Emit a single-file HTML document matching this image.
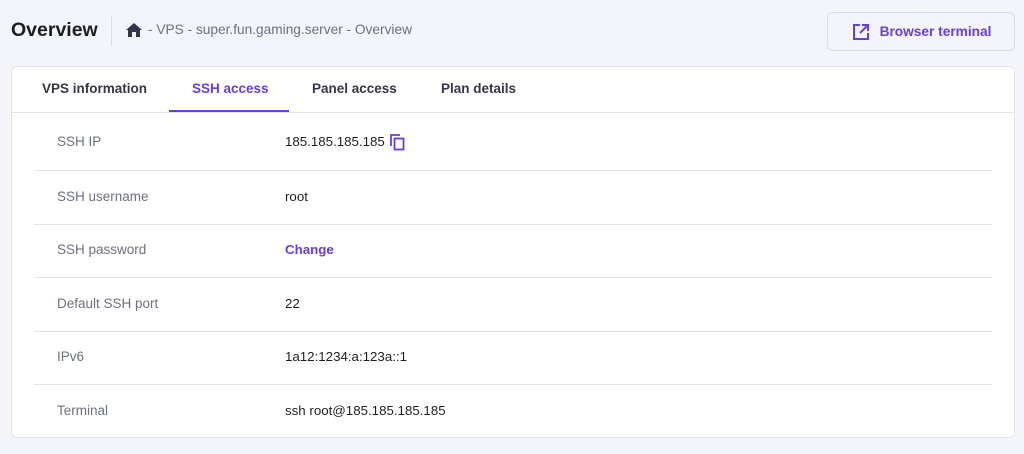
<!DOCTYPE html><html><head><style>
body{margin:0;width:1024px;height:454px;background:#f4f4fb;font-family:"Liberation Sans",sans-serif;position:relative;overflow:hidden;color:#2f1c6a}
.abs{position:absolute}
.title{left:11px;top:19px;font-size:19.5px;font-weight:bold;color:#1d1e20}
.sep{left:111px;top:16px;width:1px;height:30px;background:#dcdce6}
.bc{left:126px;top:22px;font-size:13.7px;color:#6d7081;display:flex;align-items:center;gap:6px}
.btn{left:827px;top:12px;width:188px;height:39px;border:1px solid #dadce6;border-radius:6px;box-sizing:border-box;display:flex;align-items:center;gap:9px;justify-content:center;color:#673de6;font-weight:bold;font-size:13.7px}
.card{left:11px;top:66px;width:1004px;height:372px;background:#fff;border:1px solid #e3e3ea;border-radius:6px;box-sizing:border-box}
.tab{top:81px;font-size:13.5px;font-weight:bold;color:#36344d}
.ul{left:169px;top:110px;width:120px;height:2px;background:#673de6}
.tl{left:12px;top:112px;width:1001px;height:1px;background:#e3e3ea}
.row{left:34px;width:958px;height:1px;background:#e3e3ea}
.lab{left:57px;font-size:13.5px;color:#6d7081}
.val{left:285px;font-size:13.3px;color:#1d1e20}
</style></head><body>
<div class="abs title">Overview</div>
<div class="abs sep"></div>
<div class="abs bc"><svg width="16" height="14" viewBox="0 0 16 14"><path d="M8 0L0 7h2v7h4V9h4v5h4V7h2z" fill="#36344d"/></svg><span>- VPS - super.fun.gaming.server - Overview</span></div>
<div class="abs btn"><svg width="20" height="20" viewBox="0 0 20 20" fill="none" stroke="#673de6" stroke-width="2"><path d="M9 3H3v14h14v-6M11 3h6v6M17 3L9 11"/></svg>Browser terminal</div>
<div class="abs card"></div>
<div class="abs tab" style="left:42px">VPS information</div>
<div class="abs tab" style="left:192px;color:#673de6">SSH access</div>
<div class="abs tab" style="left:312px">Panel access</div>
<div class="abs tab" style="left:441px">Plan details</div>
<div class="abs tl"></div><div class="abs ul"></div>
<div class="abs lab" style="top:134px">SSH IP</div>
<div class="abs val" style="top:134px">185.185.185.185</div>
<svg class="abs" style="left:389px;top:133px" width="18" height="18" viewBox="0 0 18 18" fill="none" stroke="#673de6" stroke-width="1.8"><path d="M2 13V2h9"/><rect x="5.5" y="5.5" width="9" height="11"/></svg>
<div class="abs row" style="top:170px"></div>
<div class="abs lab" style="top:189px">SSH username</div><div class="abs val" style="top:189px">root</div>
<div class="abs row" style="top:224px"></div>
<div class="abs lab" style="top:242px">SSH password</div><div class="abs val" style="top:242px;color:#673de6;font-weight:bold">Change</div>
<div class="abs row" style="top:277px"></div>
<div class="abs lab" style="top:296px">Default SSH port</div><div class="abs val" style="top:296px">22</div>
<div class="abs row" style="top:331px"></div>
<div class="abs lab" style="top:349px">IPv6</div><div class="abs val" style="top:349px">1a12:1234:a:123a::1</div>
<div class="abs row" style="top:384px"></div>
<div class="abs lab" style="top:403px">Terminal</div><div class="abs val" style="top:403px">ssh root@185.185.185.185</div>
</body></html>
